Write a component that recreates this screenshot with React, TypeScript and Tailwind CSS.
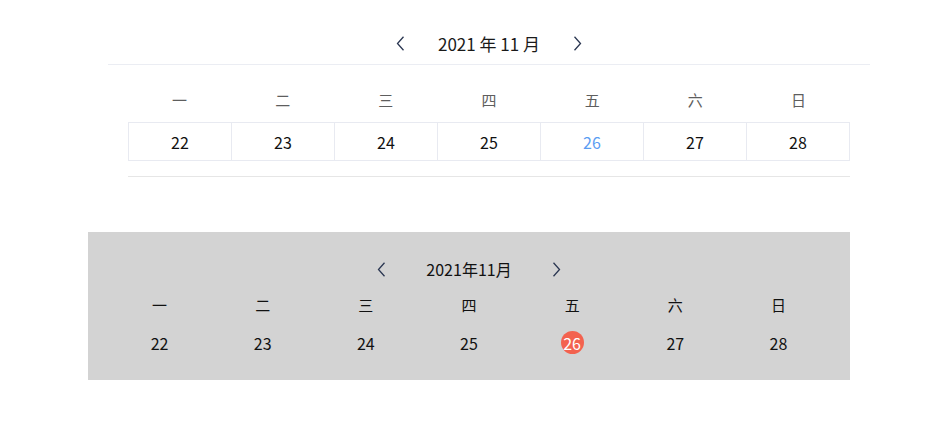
const weekdays = ["一", "二", "三", "四", "五", "六", "日"];
const days = [22, 23, 24, 25, 26, 27, 28];
const today = 26;

function Chevron({ dir }: { dir: "left" | "right" }) {
  return (
    <svg width="9" height="15" viewBox="0 0 9 15" fill="none" className="block">
      {dir === "left" ? (
        <polyline points="7.5,0.8 1.5,7.5 7.5,14.2" stroke="#2b3752" strokeWidth="1.3" />
      ) : (
        <polyline points="1.5,0.8 7.5,7.5 1.5,14.2" stroke="#2b3752" strokeWidth="1.3" />
      )}
    </svg>
  );
}

function BorderedCalendar() {
  return (
    <div className="ml-[108px] w-[762px]">
      <div className="mt-[23px] flex h-[42px] items-center justify-center gap-[33px] border-b border-[#ebedf3]">
        <Chevron dir="left" />
        <span className="text-[17px] text-[#1a1a1a]">2021 年 11 月</span>
        <Chevron dir="right" />
      </div>
      <div className="px-5 pt-[13px]">
        <div className="grid h-[44px] grid-cols-7 items-center">
          {weekdays.map((w) => (
            <div key={w} className="text-center text-[15px] text-[#5e5e5e]">
              {w}
            </div>
          ))}
        </div>
        <div className="grid grid-cols-7 border-l border-t border-[#e8eaf1]">
          {days.map((d) => (
            <div
              key={d}
              className={`flex h-[38px] items-center justify-center border-b border-r border-[#e8eaf1] text-[16px] ${
                d === today ? "text-[#5b9df2]" : "text-[#111]"
              }`}
            >
              {d}
            </div>
          ))}
        </div>
        <div className="mt-[15px] border-t border-[#e6e6e6]" />
      </div>
    </div>
  );
}

function GrayCalendar() {
  return (
    <div className="ml-[88px] mt-[55px] w-[762px] bg-[#d3d3d3] px-5 py-[19px]">
      <div className="flex h-9 items-center justify-center gap-[40px]">
        <Chevron dir="left" />
        <span className="text-[16px] text-[#111]">2021年11月</span>
        <Chevron dir="right" />
      </div>
      <div className="grid h-[37px] grid-cols-7 items-center">
        {weekdays.map((w) => (
          <div key={w} className="text-center text-[15px] text-[#111]">
            {w}
          </div>
        ))}
      </div>
      <div className="grid h-[37px] grid-cols-7 items-center">
        {days.map((d) => (
          <div key={d} className="flex justify-center">
            {d === today ? (
              <span className="flex h-[23px] w-[23px] items-center justify-center rounded-full bg-[#f3624f] text-[16px] text-white">
                {d}
              </span>
            ) : (
              <span className="text-[16px] text-[#111]">{d}</span>
            )}
          </div>
        ))}
      </div>
    </div>
  );
}

export default function App() {
  return (
    <div
      className="h-[429px] w-[949px] overflow-hidden bg-white"
      style={{ fontFamily: '"Noto Sans CJK SC", "Noto Sans", sans-serif' }}
    >
      <BorderedCalendar />
      <GrayCalendar />
    </div>
  );
}
